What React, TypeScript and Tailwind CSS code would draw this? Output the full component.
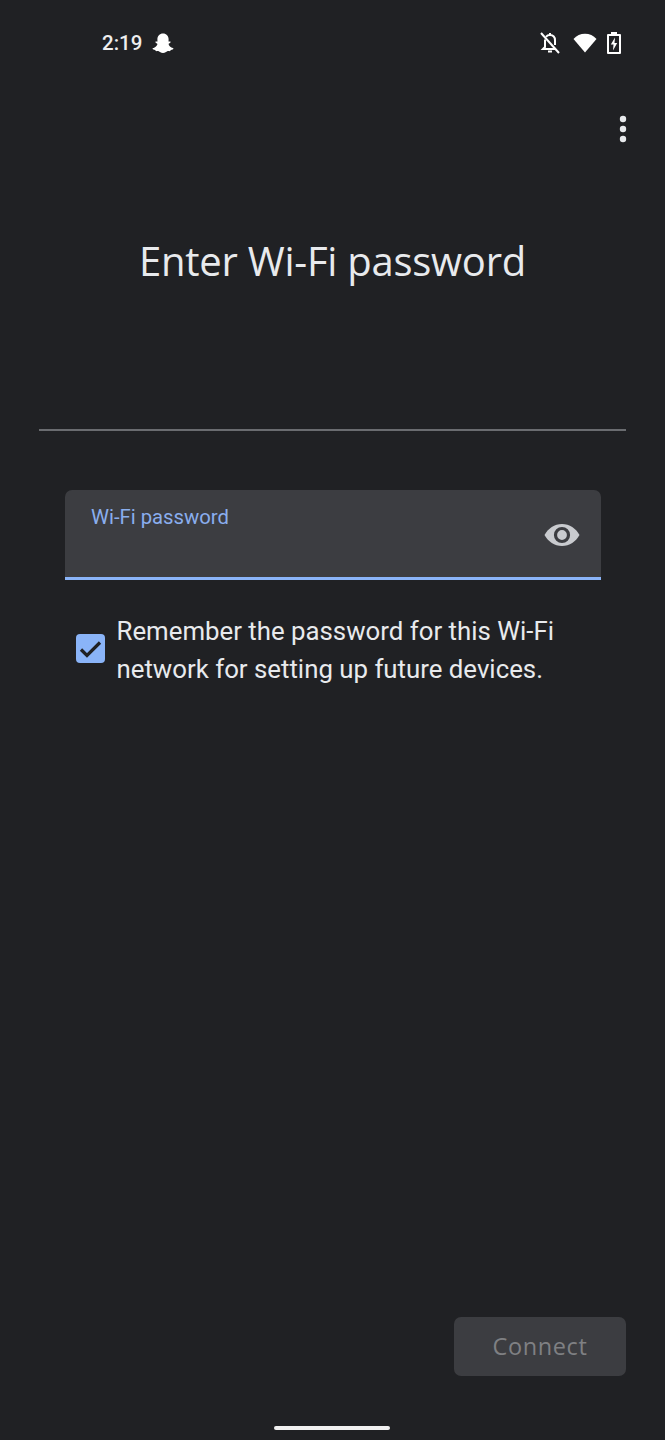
import React from "react";

function Ghost() {
  return (
    <svg width="22" height="21" viewBox="0 0 22 21" fill="#fff">
      <path d="M11 .5c3.4 0 5.6 2.5 5.6 5.500 0 1 0 1.800-.1 2.500.6.2 1.300-.3 1.800 0 .6.4.3 1.100-.3 1.400-.6.3-1.400.5-1.400 1 0 1.300 2.300 3.700 4.300 4.200.7.2.7.8.2 1.100-.7.4-1.700.5-2.300.7-.4.2-.2 1-.7 1.200-.7.2-1.800-.2-2.800.1-1.200.4-2 1.800-4.300 1.800s-3.100-1.400-4.300-1.800c-1-.3-2.100.1-2.800-.1-.5-.2-.3-1-.7-1.200-.6-.2-1.600-.3-2.300-.7-.5-.3-.5-.9.2-1.100 2-.5 4.300-2.900 4.300-4.200 0-.5-.8-.7-1.400-1-.6-.3-.9-1-.3-1.400.5-.3 1.200.2 1.800 0-.1-.7-.1-1.500-.1-2.500C5.400 3 7.600.5 11 .5z" />
    </svg>
  );
}

function BellOff() {
  return (
    <svg width="22" height="24" viewBox="0 0 22 24" fill="none" stroke="#fff" strokeWidth="2">
      <path d="M7 5.800C8 4.500 9.300 4 11 4c3.200 0 5 2.400 5 5.500v4.500" />
      <path d="M6 8.500V16l-2 2h13" />
      <path d="M9 20.500h4" />
      <path d="M10 3h2" />
      <path d="M2 2l18 20" />
    </svg>
  );
}

function Wifi() {
  return (
    <svg width="24" height="20" viewBox="0 0 24 20" fill="#fff">
      <path d="M12 19.500.5 6C3.500 2.700 7.500.8 12 .8s8.500 1.900 11.500 5.200L12 19.500z" />
    </svg>
  );
}

function Battery() {
  return (
    <svg width="14" height="22" viewBox="0 0 14 22">
      <path d="M4 0h6v2h3a1 1 0 0 1 1 1v18a1 1 0 0 1-1 1H1a1 1 0 0 1-1-1V3a1 1 0 0 1 1-1h3V0z" fill="#fff" />
      <rect x="2" y="4" width="10" height="16" fill="#202124" />
      <path d="M8 5.500 3.800 12.500h2.700L6 18.500l4.200-7.500H7.500L8 5.500z" fill="#fff" />
    </svg>
  );
}

export default function App() {
  return (
    <div className="w-[665px] h-[1440px] bg-[#202124] flex flex-col font-['Roboto',sans-serif] overflow-hidden">
      <div className="h-[87px] shrink-0 pl-[102px] pr-[44px] pt-[30px] flex items-start justify-between">
        <div className="flex items-center gap-[10px] h-[26px]">
          <span className="text-[20.500px] leading-[26px] font-medium text-[#eeeeee]">2:19</span>
          <Ghost />
        </div>
        <div className="flex items-center h-[26px]">
          <BellOff />
          <div className="w-[12px]" />
          <Wifi />
          <div className="w-[10px]" />
          <Battery />
        </div>
      </div>

      <div className="h-[84px] shrink-0 flex justify-end pr-[37px] pt-[28px]">
        <svg width="10" height="28" viewBox="0 0 10 28" fill="#e8eaed">
          <circle cx="5" cy="4" r="3.200" />
          <circle cx="5" cy="14" r="3.200" />
          <circle cx="5" cy="24" r="3.200" />
        </svg>
      </div>

      <h1 className="mt-[61px] text-center text-[40px] leading-[58px] font-normal text-[#e8eaed] font-['Open_Sans',sans-serif] tracking-[-0.25px]">
        Enter Wi-Fi password
      </h1>

      <div className="mt-[139px] mx-[39px] h-[2px] bg-[#6a6c70]" />

      <div className="mt-[59px] ml-[65px] w-[536px] h-[90px] bg-[#3c3d41] rounded-t-[7px] border-b-[3px] border-[#8ab4f8] flex items-center justify-between pl-[26px] pr-[21px]">
        <span className="self-start mt-[15px] text-[20.300px] leading-[24px] text-[#8aaeee]">Wi-Fi password</span>
        <svg width="36" height="24" viewBox="0 0 36 24" className="mt-[2px]">
          <path d="M18 1C10.500 1 4 5.500 .5 12 4 18.500 10.500 23 18 23s14-4.500 17.500-11C32 5.500 25.500 1 18 1z" fill="#c9cbcf" />
          <circle cx="18" cy="12" r="6.500" fill="none" stroke="#3c3d41" strokeWidth="3.200" />
        </svg>
      </div>

      <div className="mt-[32px] ml-[76px] flex items-start gap-[11.500px]">
        <div className="mt-[22px] w-[29px] h-[29px] rounded-[4px] bg-[#8ab4f8] flex items-center justify-center shrink-0">
          <svg width="23" height="18" viewBox="0 0 23 18" fill="none" stroke="#202124" strokeWidth="3.200">
            <path d="M2 9.500l6 6L21 2.500" />
          </svg>
        </div>
        <p className="text-[25.800px] leading-[38px] text-[#e8eaed]">
          Remember the password for this Wi-Fi
          <br />
          network for setting up future devices.
        </p>
      </div>

      <div className="flex-1" />

      <div className="flex justify-end pr-[39px]">
        <button className="w-[172px] h-[59px] rounded-[7px] bg-[#3c3d41] text-[23.500px] font-medium text-[#7f8083] tracking-[0.6px] font-['Open_Sans',sans-serif]">
          Connect
        </button>
      </div>

      <div className="h-[64px] shrink-0 flex justify-center items-start pt-[50px]">
        <div className="w-[116px] h-[4px] -translate-x-px rounded-full bg-[#f1f1f1]" />
      </div>
    </div>
  );
}
